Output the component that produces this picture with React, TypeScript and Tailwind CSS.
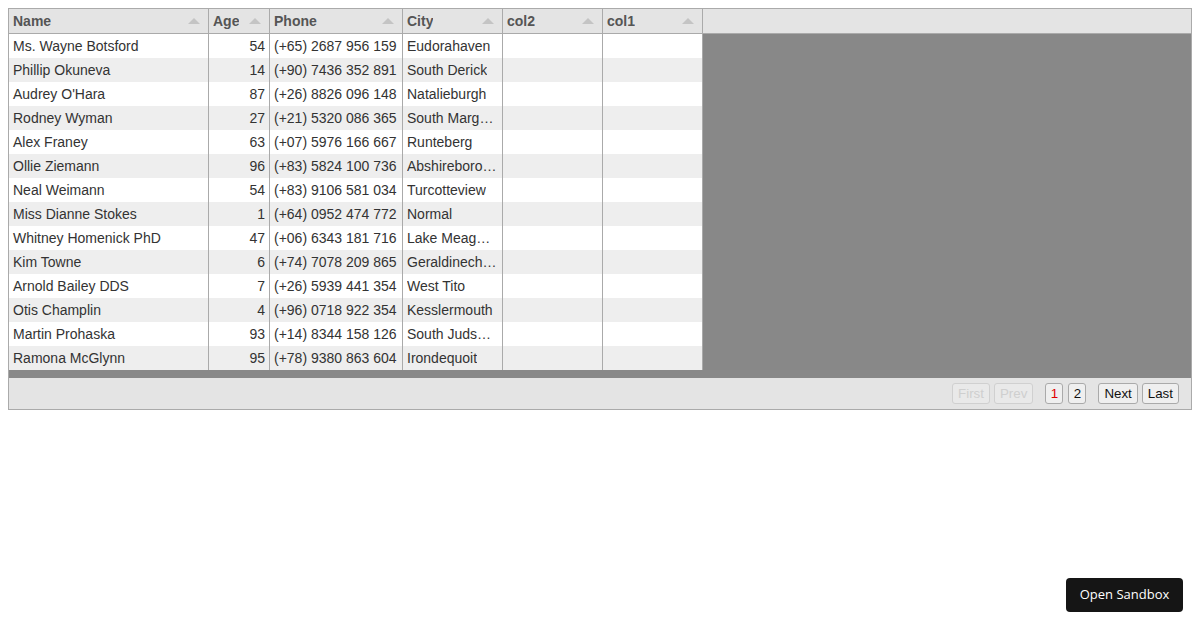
import React from "react";

const rows: [string, number, string, string][] = [
  ["Ms. Wayne Botsford", 54, "(+65) 2687 956 159", "Eudorahaven"],
  ["Phillip Okuneva", 14, "(+90) 7436 352 891", "South Derick"],
  ["Audrey O'Hara", 87, "(+26) 8826 096 148", "Natalieburgh"],
  ["Rodney Wyman", 27, "(+21) 5320 086 365", "South Margaretview"],
  ["Alex Franey", 63, "(+07) 5976 166 667", "Runteberg"],
  ["Ollie Ziemann", 96, "(+83) 5824 100 736", "Abshireborough"],
  ["Neal Weimann", 54, "(+83) 9106 581 034", "Turcotteview"],
  ["Miss Dianne Stokes", 1, "(+64) 0952 474 772", "Normal"],
  ["Whitney Homenick PhD", 47, "(+06) 6343 181 716", "Lake Meaghanfort"],
  ["Kim Towne", 6, "(+74) 7078 209 865", "Geraldinechester"],
  ["Arnold Bailey DDS", 7, "(+26) 5939 441 354", "West Tito"],
  ["Otis Champlin", 4, "(+96) 0718 922 354", "Kesslermouth"],
  ["Martin Prohaska", 93, "(+14) 8344 158 126", "South Judsonbury"],
  ["Ramona McGlynn", 95, "(+78) 9380 863 604", "Irondequoit"],
];

const Arrow = () => (
  <svg width="12" height="6" viewBox="0 0 12 6" className="shrink-0">
    <polygon points="0,6 6,0 12,6" fill="#c4c4c4" />
  </svg>
);

const HeadCell = ({ label, w }: { label: string; w: string }) => (
  <div className={`${w} h-full flex items-center justify-between pl-[4px] pr-[8px] border-r border-[#aaa] shrink-0`}>
    <span className="font-bold text-[#555] truncate">{label}</span>
    <Arrow />
  </div>
);

const Btn = ({ label, disabled, active, num }: { label: string; disabled?: boolean; active?: boolean; num?: boolean }) => {
  const color = disabled
    ? "border-[#d0d0d0] text-[#cfcfcf] bg-[#e9e9e9]"
    : active
    ? "border-[#aaa] text-[#e00000] bg-[#efefef]"
    : "border-[#aaa] text-[#111] bg-[#efefef]";
  return (
    <div
      className={`h-[21px] ${num ? "w-[18px] justify-center" : "px-[5px]"} flex items-center rounded-[3px] border text-[13.33px] leading-none ${color}`}
    >
      {label}
    </div>
  );
};

export default function App() {
  return (
    <div className="w-[1200px] h-[630px] bg-white relative" style={{ fontFamily: '"Liberation Sans", Arial, sans-serif' }}>
      <div className="pt-[8px] px-[8px]">
        <div className="w-[1184px] border border-[#aaa] text-[14px] text-[#333]">
          <div className="h-[25px] flex bg-[#e4e4e4] border-b border-[#aaa]">
            <HeadCell label="Name" w="w-[200px]" />
            <HeadCell label="Age" w="w-[61px]" />
            <HeadCell label="Phone" w="w-[133px]" />
            <HeadCell label="City" w="w-[100px]" />
            <HeadCell label="col2" w="w-[100px]" />
            <HeadCell label="col1" w="w-[100px]" />
          </div>
          <div className="bg-[#888] pb-[8px]">
            {rows.map((r, i) => (
              <div key={i} className={`h-[24px] w-[694px] flex items-center ${i % 2 ? "bg-[#eee]" : "bg-white"}`}>
                <div className="w-[200px] h-full flex items-center px-[4px] border-r border-[#aaa] truncate shrink-0">{r[0]}</div>
                <div className="w-[61px] h-full flex items-center justify-end px-[4px] border-r border-[#aaa] shrink-0">{r[1]}</div>
                <div className="w-[133px] h-full flex items-center px-[4px] border-r border-[#aaa] whitespace-nowrap overflow-hidden shrink-0">{r[2]}</div>
                <div className="w-[100px] h-full flex items-center px-[4px] border-r border-[#aaa] shrink-0 overflow-hidden">
                  <span className="block truncate">{r[3]}</span>
                </div>
                <div className="w-[100px] h-full border-r border-[#aaa] shrink-0" />
                <div className="w-[100px] h-full border-r border-[#aaa] shrink-0" />
              </div>
            ))}
          </div>
          <div className="h-[31px] bg-[#e4e4e4] flex items-center justify-end pr-[12px]">
            <div className="flex items-center gap-[4px]">
              <Btn label="First" disabled />
              <Btn label="Prev" disabled />
            </div>
            <div className="flex items-center gap-[5px] ml-[12px]">
              <Btn label="1" active num />
              <Btn label="2" num />
            </div>
            <div className="flex items-center gap-[4px] ml-[12px]">
              <Btn label="Next" />
              <Btn label="Last" />
            </div>
          </div>
        </div>
      </div>
      <div
        className="absolute left-[1066px] top-[578px] w-[117px] h-[34px] rounded-[4px] bg-[#151515] text-white text-[13px] flex items-center justify-center"
        style={{ fontFamily: '"Open Sans", sans-serif' }}
      >
        Open Sandbox
      </div>
    </div>
  );
}
